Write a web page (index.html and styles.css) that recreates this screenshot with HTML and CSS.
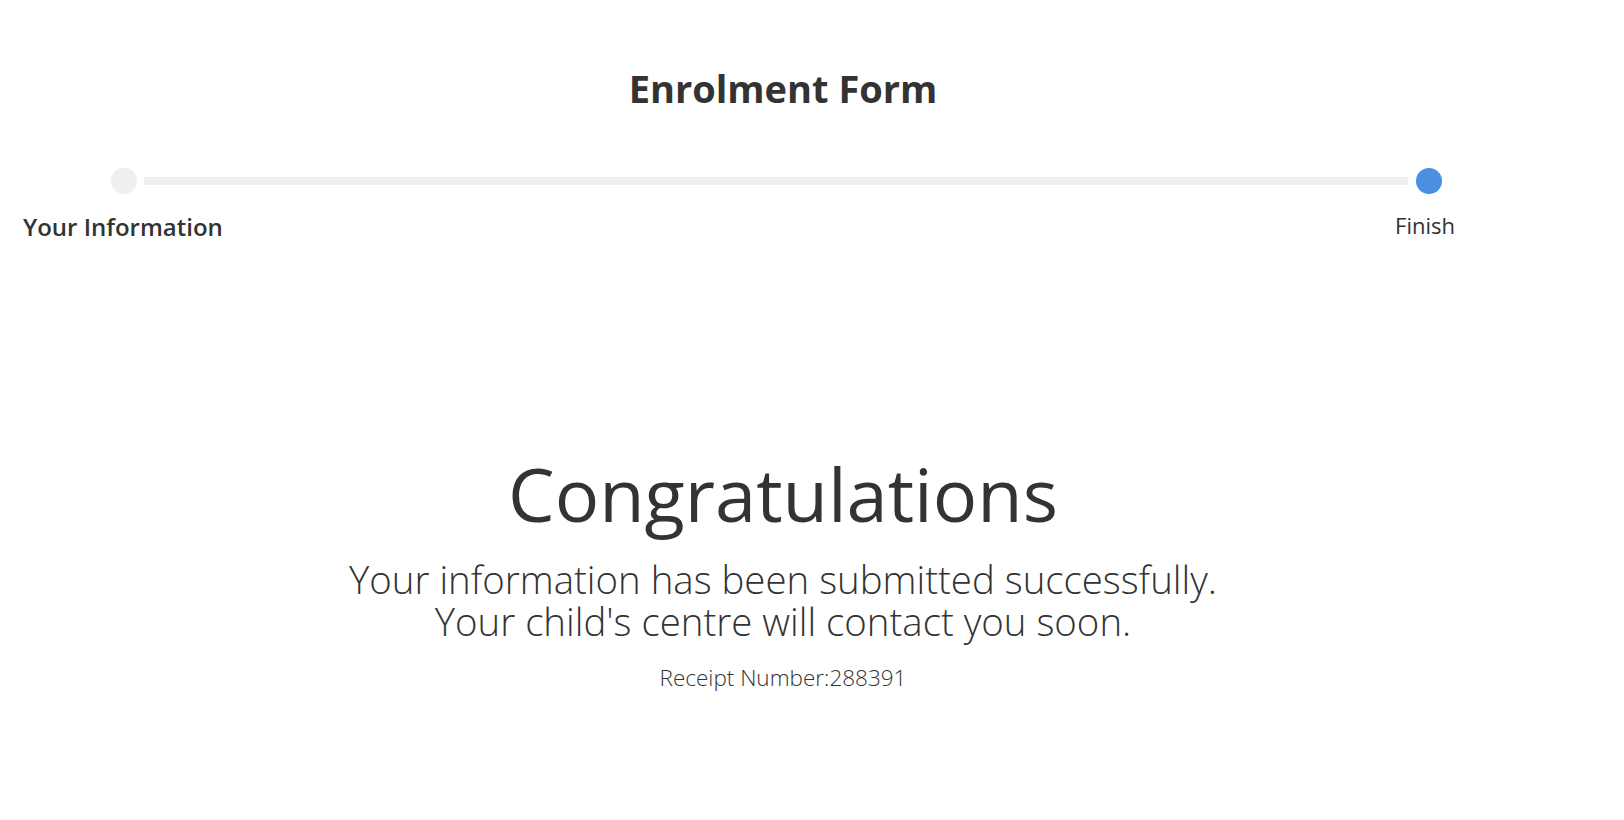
FILE: index.html
```html
<!doctype html>
<html lang="en">
<head>
  <meta charset="utf-8">
  <title>Enrolment Form</title>
  <meta name="viewport" content="width=device-width, initial-scale=1">
  <link rel="stylesheet" href="styles.css">
</head>
<body>
  <div class="page">
    <h1 class="form-title">Enrolment Form</h1>

    <div class="steps">
      <div class="steps-track">
        <span class="step-dot"></span>
        <span class="step-line"></span>
        <span class="step-dot active"></span>
      </div>
      <div class="steps-labels">
        <span class="step-label done">Your Information</span>
        <span class="step-label">Finish</span>
      </div>
    </div>

    <div class="finish-box">
      <div class="finish-title">Congratulations</div>
      <div class="finish-text">
        <p>Your information has been submitted successfully.</p>
        <p>Your child's centre will contact you soon.</p>
      </div>
      <div class="receipt">Receipt Number:288391</div>
    </div>
  </div>
</body>
</html>
```

FILE: styles.css
```css
html, body {
  margin: 0;
  padding: 0;
  background: #fff;
}
body {
  font-family: 'Open Sans', 'Noto Sans', Arial, sans-serif;
  color: #333;
}
.page {
  width: 1566px;
  padding-top: 64px;
}
.form-title {
  margin: 0;
  font-size: 38px;
  line-height: 48px;
  font-weight: 700;
  text-align: center;
}
.steps {
  margin-top: 56px;
}
.steps-track {
  display: flex;
  align-items: center;
  margin-left: 111px;
  width: 1331px;
  height: 26px;
}
.step-dot {
  width: 26px;
  height: 26px;
  border-radius: 50%;
  background: #efefef;
  flex: none;
}
.step-dot.active {
  background: #4a90e2;
}
.step-line {
  flex: 1;
  height: 8px;
  margin: 0 8px 0 7px;
  background: #efefef;
}
.steps-labels {
  display: flex;
  justify-content: space-between;
  align-items: flex-start;
  margin: 18px 0 0 23px;
  width: 1432px;
}
.step-label {
  font-size: 22px;
  line-height: 26px;
}
.step-label.done {
  font-size: 24px;
  line-height: 30px;
  font-weight: 600;
}
.finish-box {
  margin-top: 209px;
  text-align: center;
}
.finish-title {
  font-size: 74px;
  line-height: 86px;
}
.finish-text {
  margin-top: 21px;
  font-size: 38.4px;
  font-weight: 300;
}
.finish-text p {
  margin: 0;
  line-height: 42px;
  height: 42px;
}
.receipt {
  margin-top: 21px;
  font-size: 22.5px;
  line-height: 30px;
  font-weight: 300;
}
```
